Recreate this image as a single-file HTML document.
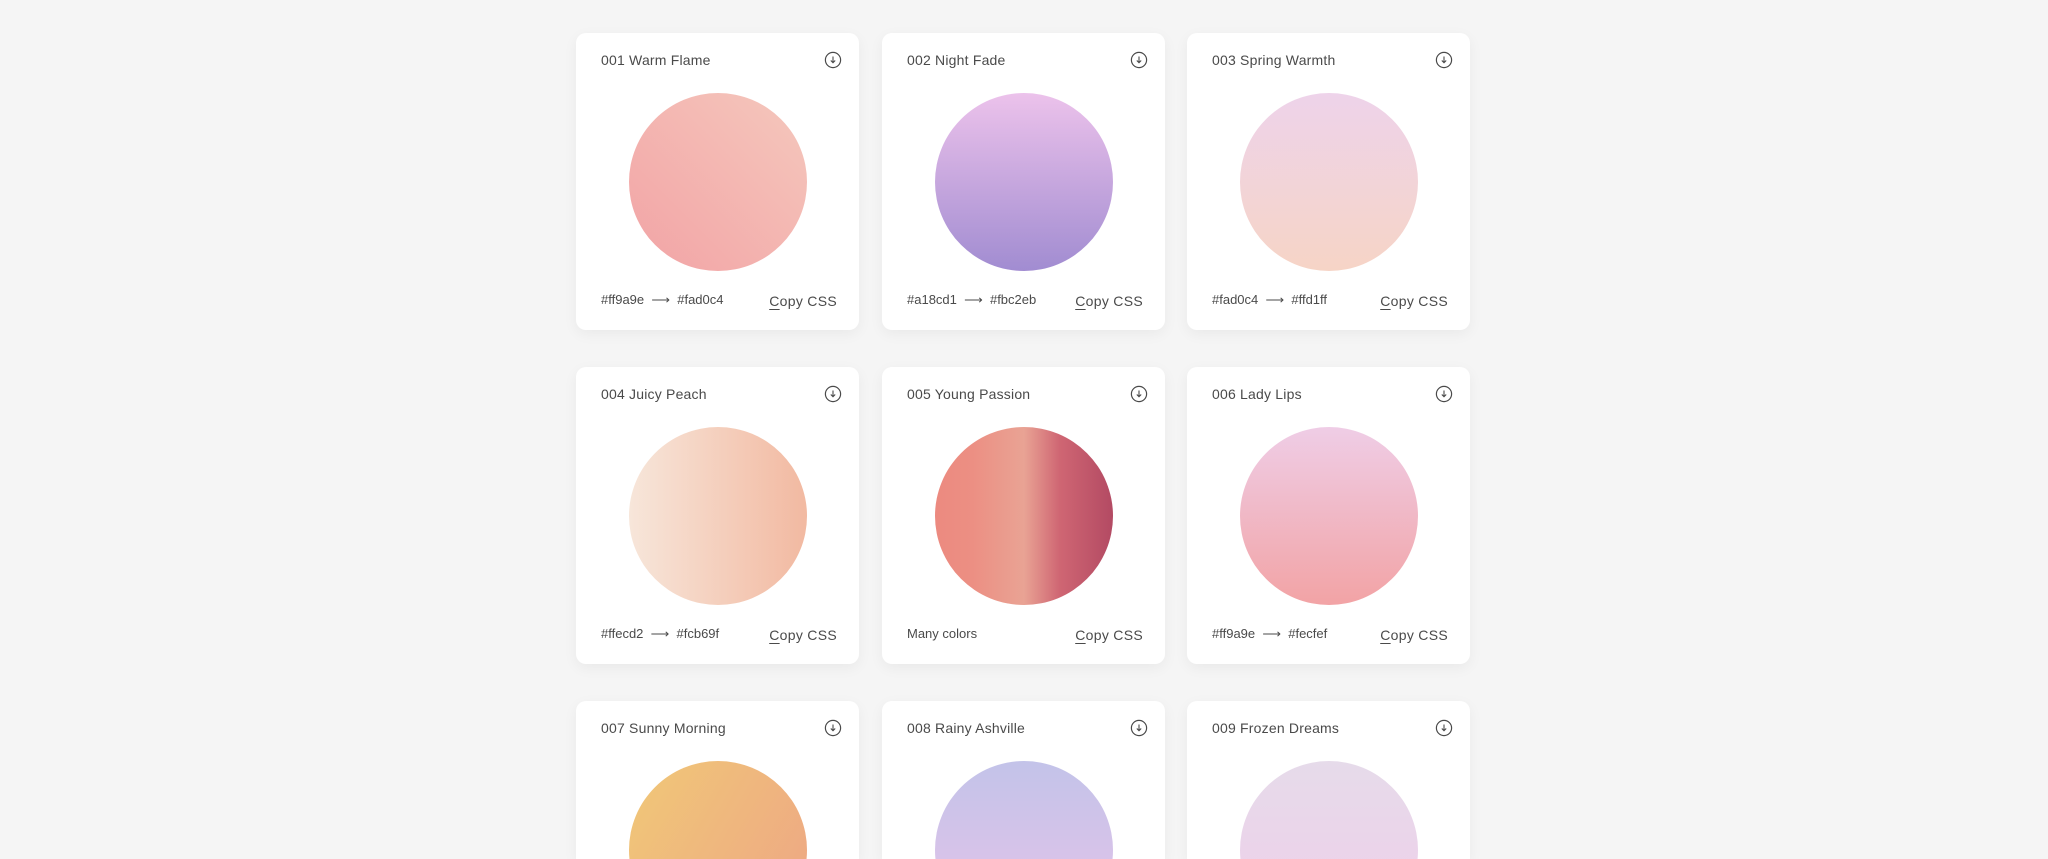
<!DOCTYPE html>
<html><head><meta charset="utf-8"><style>
html,body{margin:0;padding:0;background:#f5f5f5;width:2048px;height:859px;overflow:hidden;font-family:"Liberation Sans",sans-serif;color:#4a4a4a}
#w{position:relative;width:2048px;height:859px;overflow:hidden}
.card{position:absolute;width:283px;height:297px;background:#fff;border-radius:10px;box-shadow:0 4px 14px rgba(0,0,0,.05);overflow:hidden}
.t{position:absolute;left:25px;top:19px;font-size:14px;letter-spacing:.2px}
.dl{position:absolute;left:248px;top:18px;width:18px;height:18px}
.c{position:absolute;left:53px;top:60px;width:178px;height:178px;border-radius:50%}
.f{position:absolute;left:25px;top:259px;font-size:13px;white-space:pre}
.cp{position:absolute;right:22px;top:260px;font-size:14px;letter-spacing:.3px}
.cp span{text-decoration:underline;text-underline-offset:3px}
.r3{height:158px;border-radius:10px 10px 0 0}
</style></head><body><div id="w">
<svg width="0" height="0" style="position:absolute"><defs><symbol id="d" viewBox="0 0 18 18"><circle cx="9" cy="9" r="7.6" fill="none" stroke="#4a4a4a" stroke-width="1.2"/><path d="M9 5.5v6M6.8 9.5L9 11.7l2.2-2.2" fill="none" stroke="#4a4a4a" stroke-width="1.1"/></symbol></defs></svg>

<div class="card" style="left:576px;top:33px"><div class="t">001 Warm Flame</div><svg class="dl"><use href="#d"/></svg><div class="c" style="background:linear-gradient(45deg,#f2a3a5,#f5c8bd)"></div><div class="f">#ff9a9e  ⟶  #fad0c4</div><div class="cp"><span>C</span>opy CSS</div></div>
<div class="card" style="left:882px;top:33px"><div class="t">002 Night Fade</div><svg class="dl"><use href="#d"/></svg><div class="c" style="background:linear-gradient(to top,#a18cd1,#ecc2eb)"></div><div class="f">#a18cd1  ⟶  #fbc2eb</div><div class="cp"><span>C</span>opy CSS</div></div>
<div class="card" style="left:1187px;top:33px"><div class="t">003 Spring Warmth</div><svg class="dl"><use href="#d"/></svg><div class="c" style="background:linear-gradient(to top,#f6d4c6,#eed3ea)"></div><div class="f">#fad0c4  ⟶  #ffd1ff</div><div class="cp"><span>C</span>opy CSS</div></div>

<div class="card" style="left:576px;top:367px"><div class="t">004 Juicy Peach</div><svg class="dl"><use href="#d"/></svg><div class="c" style="background:linear-gradient(to right,#f7e6da,#f2b9a1)"></div><div class="f">#ffecd2  ⟶  #fcb69f</div><div class="cp"><span>C</span>opy CSS</div></div>
<div class="card" style="left:882px;top:367px"><div class="t">005 Young Passion</div><svg class="dl"><use href="#d"/></svg><div class="c" style="background:linear-gradient(to right,#ec8a80 0%,#ec8f83 21%,#e9a394 50%,#cf6673 70%,#b34a63 100%)"></div><div class="f">Many colors</div><div class="cp"><span>C</span>opy CSS</div></div>
<div class="card" style="left:1187px;top:367px"><div class="t">006 Lady Lips</div><svg class="dl"><use href="#d"/></svg><div class="c" style="background:linear-gradient(to top,#f2a3a5,#efcde6)"></div><div class="f">#ff9a9e  ⟶  #fecfef</div><div class="cp"><span>C</span>opy CSS</div></div>

<div class="card r3" style="left:576px;top:701px"><div class="t">007 Sunny Morning</div><svg class="dl"><use href="#d"/></svg><div class="c" style="background:linear-gradient(120deg,#f0c877,#eea585)"></div></div>
<div class="card r3" style="left:882px;top:701px"><div class="t">008 Rainy Ashville</div><svg class="dl"><use href="#d"/></svg><div class="c" style="background:linear-gradient(to top,#e8c3e9,#c3c3e9)"></div></div>
<div class="card r3" style="left:1187px;top:701px"><div class="t">009 Frozen Dreams</div><svg class="dl"><use href="#d"/></svg><div class="c" style="background:linear-gradient(to top,#f0cdeb,#e6dbea)"></div></div>
</div></body></html>
